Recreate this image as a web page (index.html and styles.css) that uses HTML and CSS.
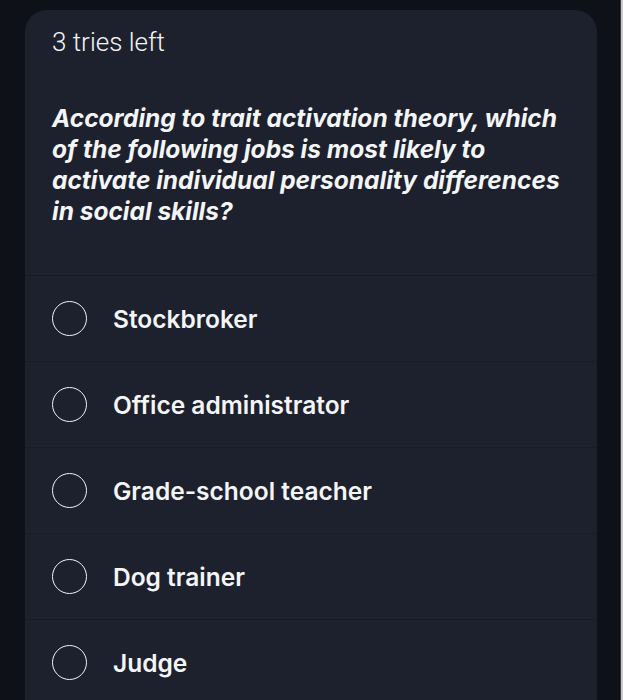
FILE: index.html
```html
<!DOCTYPE html>
<html lang="en">
<head>
<meta charset="UTF-8">
<meta name="viewport" content="width=device-width, initial-scale=1.0">
<title>Question</title>
    <link rel="stylesheet" href="styles.css">
</head>
<body>
    <div class="screen">
        <div class="card">
            <div class="tries">3 tries left</div>
            <div class="question">
                According to trait activation theory, which of the following jobs is most likely to activate individual personality differences in social skills?
            </div>
            <div class="options">
                <label class="option"><span class="radio"></span>Stockbroker</label>
                <label class="option"><span class="radio"></span>Office administrator</label>
                <label class="option"><span class="radio"></span>Grade-school teacher</label>
                <label class="option"><span class="radio"></span>Dog trainer</label>
                <label class="option"><span class="radio"></span>Judge</label>
            </div>
        </div>
    </div>
</body>
</html>
```

FILE: styles.css
```css
html{
    background-color: #c9c9cb;
}
body{
    margin: 0;
    font-family: Inter, "Noto Sans", sans-serif;
    color: #f4f5f7;
}
.screen{
    width: 620px;
    height: 700px;
    overflow: hidden;
    background-color: #0e1117;
    border-right: 1px solid #3a3d44;
}
.card{
    margin: 10px 23px 0 25px;
    background-color: #1d212d;
    border-radius: 22px 22px 0 0;
}
.tries{
    padding: 17px 27px 0;
    font-family: Roboto, sans-serif;
    font-weight: 300;
    font-size: 26px;
    line-height: 30px;
}
.question{
    padding: 46px 27px 48px;
    font-weight: 700;
    font-style: italic;
    font-size: 24.5px;
    line-height: 31px;
    border-bottom: 1px solid #181b25;
}
.option{
    display: flex;
    align-items: center;
    height: 85px;
    padding-left: 27px;
    border-bottom: 1px solid #191c26;
    font-weight: 600;
    font-size: 24.5px;
}
.radio{
    width: 33px;
    height: 33px;
    border: 1.5px solid #f2f3f5;
    border-radius: 50%;
    margin-right: 26px;
    flex-shrink: 0;
}
```
